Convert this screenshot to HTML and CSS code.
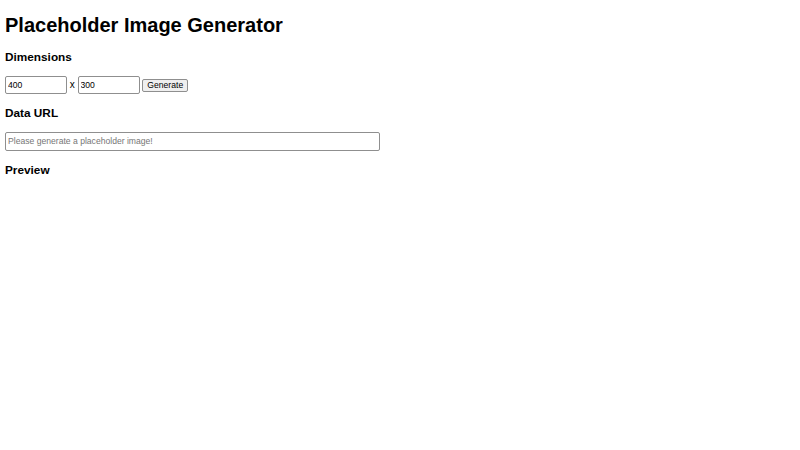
FILE: index.html
```html
<!DOCTYPE html>
<html lang="en">
<head>
    <meta charset="UTF-8">
    <meta name="viewport" content="width=device-width, initial-scale=1.0">
    <title>Placeholder Image Generator</title>
    <link rel="stylesheet" href="styles.css">
</head>
<body>
    <h1>Placeholder Image Generator</h1>

    <h3>Dimensions</h3>
    <div class="dimensions">
        <input type="text" id="width" class="size-input" value="400"> x <input type="text" id="height" class="size-input" value="300"> <button id="generateBtn">Generate</button>
    </div>

    <h3>Data URL</h3>
    <input type="text" id="dataUrl" class="url-input" placeholder="Please generate a placeholder image!" readonly>

    <h3>Preview</h3>
    <div class="preview" id="preview"></div>
</body>
</html>
```

FILE: styles.css
```css
body {
    font-family: "Liberation Sans", Arial, sans-serif;
    font-size: 10px;
    margin: 5px;
    color: #000;
    background: #fff;
}

h1 {
    font-size: 20px;
    margin: 9px 0 13.4px;
}

h3 {
    font-size: 11.8px;
    margin: 11.8px 0;
}

input {
    font-family: "Liberation Sans", Arial, sans-serif;
    font-size: 8.6px;
    box-sizing: border-box;
    border: 1px solid #8f8f8f;
    border-radius: 2px;
    padding: 0 2px;
    vertical-align: middle;
}

input::placeholder {
    color: #767676;
}

.size-input {
    width: 62px;
    height: 18px;
}

.url-input {
    width: 375px;
    height: 19px;
}

button {
    font-family: "Liberation Sans", Arial, sans-serif;
    font-size: 8.6px;
    box-sizing: border-box;
    height: 13px;
    padding: 0 4px;
    border: 1px solid #8f8f8f;
    border-radius: 2px;
    background-color: #efefef;
    vertical-align: middle;
}
```
